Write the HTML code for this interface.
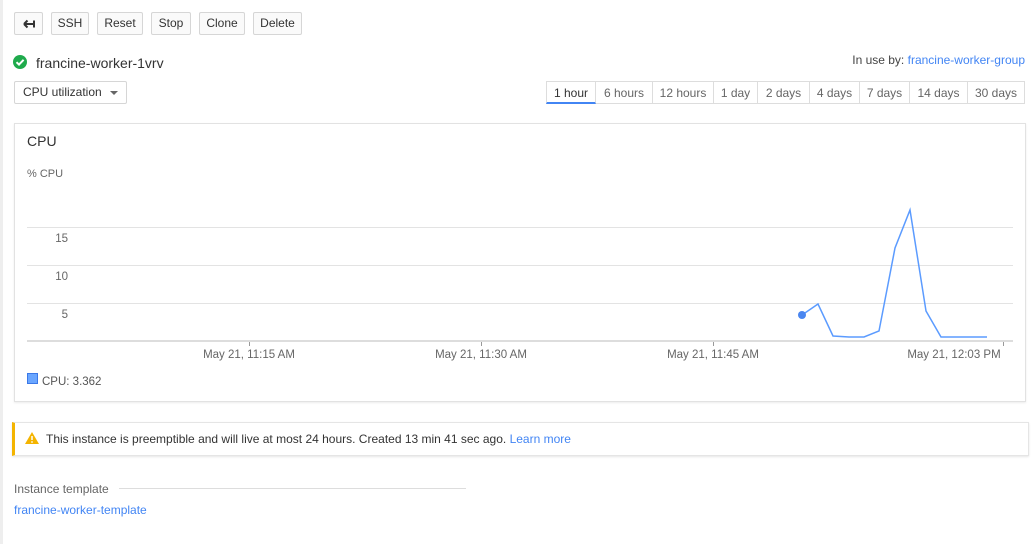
<!DOCTYPE html>
<html><head><meta charset="utf-8"><style>
*{box-sizing:border-box;margin:0;padding:0}
body{width:1032px;height:544px;background:#fff;font-family:"Liberation Sans",Arial,sans-serif;color:#333;position:relative;overflow:hidden;font-size:12px}
.a{position:absolute}
.btn{position:absolute;top:12px;height:23px;border:1px solid #d6d6d6;border-radius:2px;background:#fafafa;font-size:12px;line-height:21px;text-align:center;color:#333}
.tab{position:absolute;top:81px;height:23px;border:1px solid #ddd;border-left:none;font-size:12px;line-height:23px;text-align:center;color:#666;background:#fff}
.lk{color:#4285f4}
</style></head><body>
<div class="a" style="left:0;top:0;width:3px;height:544px;background:#eee"></div>
<div class="btn" style="left:14px;width:29px"><svg width="16" height="12" viewBox="0 0 16 12" style="margin-top:5px"><path d="M3 6H13M3 6L6.5 2.5M3 6L6.5 9.5M13 2.5V9.5" stroke="#333" stroke-width="2" fill="none"/></svg></div>
<div class="btn" style="left:51px;width:38px">SSH</div>
<div class="btn" style="left:97px;width:46px">Reset</div>
<div class="btn" style="left:151px;width:40px">Stop</div>
<div class="btn" style="left:199px;width:46px">Clone</div>
<div class="btn" style="left:253px;width:49px">Delete</div>
<svg class="a" style="left:13px;top:55px" width="14" height="14" viewBox="0 0 14 14"><circle cx="7" cy="7" r="7" fill="#1faa4c"/><path d="M3.5 7.2L6 9.6L10.6 4.8" stroke="#fff" stroke-width="2" fill="none"/></svg>
<div class="a" style="left:36px;top:55px;font-size:14px;color:#333">francine-worker-1vrv</div>
<div class="a" style="right:7px;top:53px;font-size:12px;color:#444">In use by: <span class="lk">francine-worker-group</span></div>
<div class="btn" style="left:14px;top:81px;width:113px;text-align:left;padding-left:8px;background:#fff">CPU utilization<span style="position:absolute;left:95px;top:9px;border:4px solid transparent;border-top:4px solid #666"></span></div>
<div class="tab" style="left:546px;width:50px;border-left:1px solid #ddd;color:#333;border-bottom:2px solid #4285f4">1 hour</div>
<div class="tab" style="left:596px;width:57px">6 hours</div>
<div class="tab" style="left:653px;width:61px">12 hours</div>
<div class="tab" style="left:714px;width:44px">1 day</div>
<div class="tab" style="left:758px;width:52px">2 days</div>
<div class="tab" style="left:810px;width:50px">4 days</div>
<div class="tab" style="left:860px;width:50px">7 days</div>
<div class="tab" style="left:910px;width:58px">14 days</div>
<div class="tab" style="left:968px;width:57px">30 days</div>
<div class="a" style="left:14px;top:123px;width:1012px;height:279px;border:1px solid #e2e2e2;box-shadow:0 1px 2px rgba(0,0,0,.08)"></div>
<div class="a" style="left:27px;top:133px;font-size:14px;color:#333">CPU</div>
<div class="a" style="left:27px;top:168px;font-size:11px;color:#666">% CPU</div>
<svg class="a" style="left:0;top:0" width="1032" height="544">
<g stroke="#e3e3e3" stroke-width="1"><line x1="27" y1="227.5" x2="1013" y2="227.5"/><line x1="27" y1="265.5" x2="1013" y2="265.5"/><line x1="27" y1="303.5" x2="1013" y2="303.5"/></g>
<line x1="27" y1="341" x2="1013" y2="341" stroke="#ddd" stroke-width="2"/>
<g stroke="#999"><line x1="249.5" y1="342" x2="249.5" y2="346"/><line x1="481.5" y1="342" x2="481.5" y2="346"/><line x1="713.5" y1="342" x2="713.5" y2="346"/><line x1="1003.5" y1="342" x2="1003.5" y2="346"/></g>
<g fill="#666" font-size="11.5" font-family="Liberation Sans,Arial,sans-serif" text-anchor="end"><text x="68" y="242">15</text><text x="68" y="280">10</text><text x="68" y="318">5</text></g>
<g fill="#666" font-size="11.5" font-family="Liberation Sans,Arial,sans-serif" text-anchor="middle"><text x="249" y="358">May 21, 11:15 AM</text><text x="481" y="358">May 21, 11:30 AM</text><text x="713" y="358">May 21, 11:45 AM</text><text x="954" y="358">May 21, 12:03 PM</text></g>
<polyline points="802,315 818,304 833,336 849,337 864,337 879,331 895,248 910,210 926,311 941,337 987,337" fill="none" stroke="#5b9bff" stroke-width="1.5"/>
<circle cx="802" cy="315" r="4" fill="#4a86f0"/>
<rect x="27.5" y="373.5" width="10" height="10" fill="#6aa6ff" stroke="#3b78e7"/>
<text x="42" y="385" fill="#555" font-size="11.5" font-family="Liberation Sans,Arial,sans-serif">CPU: 3.362</text>
</svg>
<div class="a" style="left:12px;top:422px;width:1017px;height:34px;border:1px solid #e5e5e5;border-left:3px solid #f4b400;box-shadow:0 1px 2px rgba(0,0,0,.1)"></div>
<svg class="a" style="left:25px;top:432px" width="14" height="12" viewBox="0 0 14 12"><path d="M7 0L14 12H0Z" fill="#f4b400"/><path d="M7 4V8M7 9.3V10.7" stroke="#fff" stroke-width="1.5"/></svg>
<div class="a" style="left:46px;top:432px;font-size:12px;color:#333">This instance is preemptible and will live at most 24 hours. Created 13 min 41 sec ago. <span class="lk">Learn more</span></div>
<div class="a" style="left:14px;top:482px;font-size:12px;color:#666">Instance template</div>
<div class="a" style="left:119px;top:488px;width:347px;height:1px;background:#ddd"></div>
<div class="a lk" style="left:14px;top:503px;font-size:12px">francine-worker-template</div>
</body></html>
